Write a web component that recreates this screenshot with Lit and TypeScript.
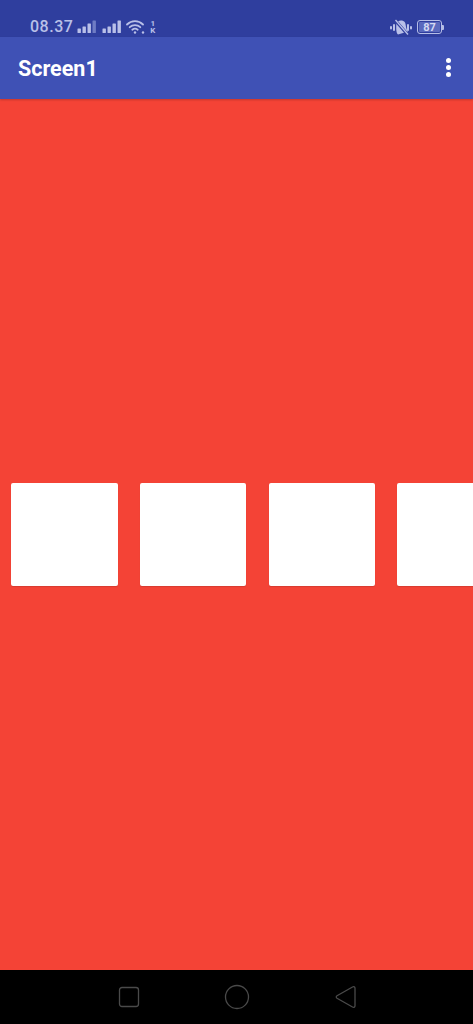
import { LitElement, html, css } from "lit";
import { customElement } from "lit/decorators.js";

@customElement("app-root")
export class AppRoot extends LitElement {
  static styles = css`
    :host { display: flex; flex-direction: column; width: 473px; height: 1024px; overflow: hidden; font-family: Roboto, "Liberation Sans", sans-serif; }
    .status { height: 37px; flex: none; background: #2f3e9e; display: flex; align-items: center; padding: 17px 30px 0 30px; box-sizing: border-box; color: #b5bde6; }
    .time { font-size: 16px; letter-spacing: 0.5px; line-height: 20px; font-weight: 500; color: #b9c0e8; }
    .left { display: flex; align-items: center; gap: 5px; }
    .sig { display: block; }
    .first { margin-left: -1px; }
    .wifi { margin-left: -1px; }
    .kb { display: flex; flex-direction: column; font-size: 8px; line-height: 7.5px; font-weight: 700; align-items: center; margin-left: -1px; color: #b9c0e8; }
    .right { margin-left: auto; margin-right: -1px; display: flex; align-items: center; gap: 5px; }
    .batt-wrap { display: flex; align-items: center; }
    .batt { width: 25px; height: 14px; border: 1.4px solid #b5bde6; border-radius: 3px; box-sizing: border-box; display: flex; padding: 1px; }
    .batt-fill { flex: 1; background: #5a69bd; border-radius: 1px; display: flex; align-items: center; justify-content: center; font-size: 11px; font-weight: 700; color: #d5daf2; line-height: 9px; }
    .batt-tip { width: 2px; height: 5px; background: #b5bde6; border-radius: 0 1px 1px 0; }
    .appbar { height: 62px; flex: none; background: #3f51b5; display: flex; align-items: center; justify-content: space-between; padding: 0 22px 0 18px; box-shadow: 0 1px 2px rgba(0,0,0,.2); z-index: 1; }
    .title { color: #fff; font-size: 21.5px; font-weight: 700; }
    .menu { display: flex; flex-direction: column; gap: 2px; margin-top: -1px; }
    .menu i { display: block; width: 5px; height: 5px; border-radius: 50%; background: #fff; }
    .content { flex: 1; background: #f44336; display: flex; align-items: center; gap: 22.3px; padding-left: 11px; overflow: hidden; }
    .box { flex: none; width: 106.5px; height: 103.5px; background: #fff; border-radius: 2px; box-shadow: 0 1px 1px rgba(0,0,0,.12); }
    .nav { height: 54px; flex: none; background: #000; display: flex; align-items: center; padding: 0 0 0 118px; box-sizing: border-box; }
    .nav svg { display: block; flex: none; }
    .circle { margin-left: 84px; }
    .tri { margin-left: 85px; }
  `;

  private bars(lastFill: string, extra = "") {
    return html`<svg class="sig ${extra}" width="20" height="14" viewBox="0 0 20 14">
      <rect x="0.5" y="8.5" width="3.4" height="4.5" rx=".5" fill="#b9c0e8"/>
      <rect x="5.5" y="6.5" width="3.4" height="6.5" rx=".5" fill="#b9c0e8"/>
      <rect x="10.5" y="3.5" width="3.4" height="9.5" rx=".5" fill="#b9c0e8"/>
      <rect x="15.5" y="0.5" width="3.4" height="12.5" rx=".5" fill="${lastFill}"/>
    </svg>`;
  }

  render() {
    return html`
      <div class="status">
        <div class="left">
          <span class="time">08.37</span>
          ${this.bars("#6f7cc4", "first")}
          ${this.bars("#b9c0e8")}
          <svg class="wifi" width="20" height="16" viewBox="0 0 20 16" fill="none" stroke="#b9c0e8" stroke-width="1.8" stroke-linecap="round">
            <path d="M1 5.5C5.5 1 12.5 1 17 5.5"/>
            <path d="M3.7 8.2C6.8 5.3 11.2 5.3 14.3 8.2"/>
            <path d="M6.3 10.8C8 9.4 10 9.4 11.7 10.8"/>
            <circle cx="9" cy="13.5" r="1.2" fill="#b9c0e8" stroke="none"/>
            <circle cx="17" cy="13.5" r="1.2" fill="#b9c0e8" stroke="none"/>
          </svg>
          <span class="kb"><span>1</span><span>K</span></span>
        </div>
        <div class="right">
          <svg width="22" height="17" viewBox="0 0 22 17">
            <path d="M6.5 4C7.5 1.2 13 0.5 15 3.5C16 5.5 15.5 9 18 12.5L8 15.5C6 14 6 8 6.5 4Z" fill="#b9c0e8"/>
            <path d="M5 1L18 16" stroke="#2f3e9e" stroke-width="3"/>
            <path d="M5.5 1L18 15.5" stroke="#b9c0e8" stroke-width="1.3"/>
            <rect x="3" y="5" width="2" height="7" rx="1" fill="#b9c0e8"/>
            <rect x="0" y="7" width="2" height="3.4" rx="1" fill="#b9c0e8"/>
            <rect x="17" y="5" width="2" height="7" rx="1" fill="#b9c0e8"/>
            <rect x="20" y="7" width="2" height="3.4" rx="1" fill="#b9c0e8"/>
          </svg>
          <div class="batt-wrap">
            <div class="batt"><div class="batt-fill">87</div></div>
            <div class="batt-tip"></div>
          </div>
        </div>
      </div>
      <div class="appbar">
        <div class="title">Screen1</div>
        <div class="menu"><i></i><i></i><i></i></div>
      </div>
      <div class="content">
        <div class="box"></div><div class="box"></div><div class="box"></div><div class="box"></div>
      </div>
      <div class="nav">
        <svg width="22" height="22" viewBox="0 0 22 22" fill="none" stroke="#4a4a4a" stroke-width="1.3"><rect x="1.5" y="1.5" width="19" height="19" rx="2.5"/></svg>
        <svg class="circle" width="26" height="26" viewBox="0 0 26 26" fill="none" stroke="#4a4a4a" stroke-width="1.3"><circle cx="13" cy="13" r="11.5"/></svg>
        <svg class="tri" width="21" height="24" viewBox="0 0 21 24" fill="none" stroke="#4a4a4a" stroke-width="1.3" stroke-linejoin="round"><path d="M17.5 2C19 1.3 20 2 20 3.3V20.7C20 22 19 22.7 17.5 22L2 13.2C1 12.6 1 11.4 2 10.8Z"/></svg>
      </div>
    `;
  }
}
